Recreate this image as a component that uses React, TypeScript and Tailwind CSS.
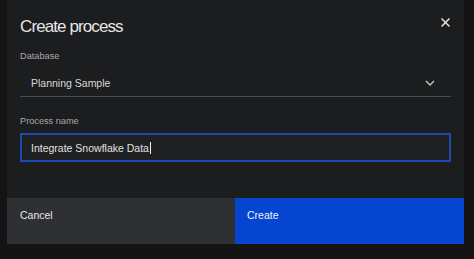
import React from "react";

export default function App() {
  return (
    <div className="w-[474px] h-[259px] bg-[#141414] pl-[7px] font-['Liberation_Sans',Arial,sans-serif] overflow-hidden">
      <div className="relative w-[457px] h-[244px] bg-[#1c1d1f] flex flex-col">
        <button className="absolute right-[14px] top-[18px] w-[9px] h-[9px] flex items-center justify-center">
          <svg width="9" height="9" viewBox="0 0 9 9" fill="none">
            <path d="M1 1L8 8M8 1L1 8" stroke="#e4e4e4" strokeWidth="1.5" strokeLinecap="square" />
          </svg>
        </button>
        <div className="px-[13px] pt-[17px]">
          <h1 className="text-[17px] leading-[20px] tracking-[-0.9px] text-[#e6e6e6]">Create process</h1>
          <div className="mt-[13px] text-[9.2px] leading-[12px] text-[#a9a9a9]">Database</div>
          <div className="mt-[2px] pt-[12px] pb-[6px] pl-[11px] pr-[16px] border-b border-[#4a4c4f] flex items-center justify-between">
            <span className="text-[10.5px] leading-[14px] text-[#d9d9d9]">Planning Sample</span>
            <svg width="10" height="6" viewBox="0 0 10 6" fill="none">
              <path d="M1 1L5 5L9 1" stroke="#c8c8c8" strokeWidth="1.3" />
            </svg>
          </div>
          <div className="mt-[18px] text-[9.2px] leading-[12px] text-[#a9a9a9]">Process name</div>
          <div className="mt-[6px] h-[29px] border-2 border-[#1d49b3] bg-[#1f2022] pl-[9px] flex items-center">
            <span className="text-[10.5px] leading-[14px] text-[#e0e0e0]">Integrate Snowflake Data</span>
            <span className="ml-[1px] w-[1px] h-[12px] bg-[#f0f0f0]" />
          </div>
        </div>
        <div className="mt-auto grid grid-cols-[228px_229px] h-[46px]">
          <button className="bg-[#2e3033] text-left pl-[13px] pt-[10px] self-stretch flex items-start text-[10.5px] leading-[14px] text-[#e8e8e8]">
            Cancel
          </button>
          <button className="bg-[#0645cf] text-left pl-[12px] pt-[10px] self-stretch flex items-start text-[10.5px] leading-[14px] text-[#eef2fc]">
            Create
          </button>
        </div>
      </div>
    </div>
  );
}
